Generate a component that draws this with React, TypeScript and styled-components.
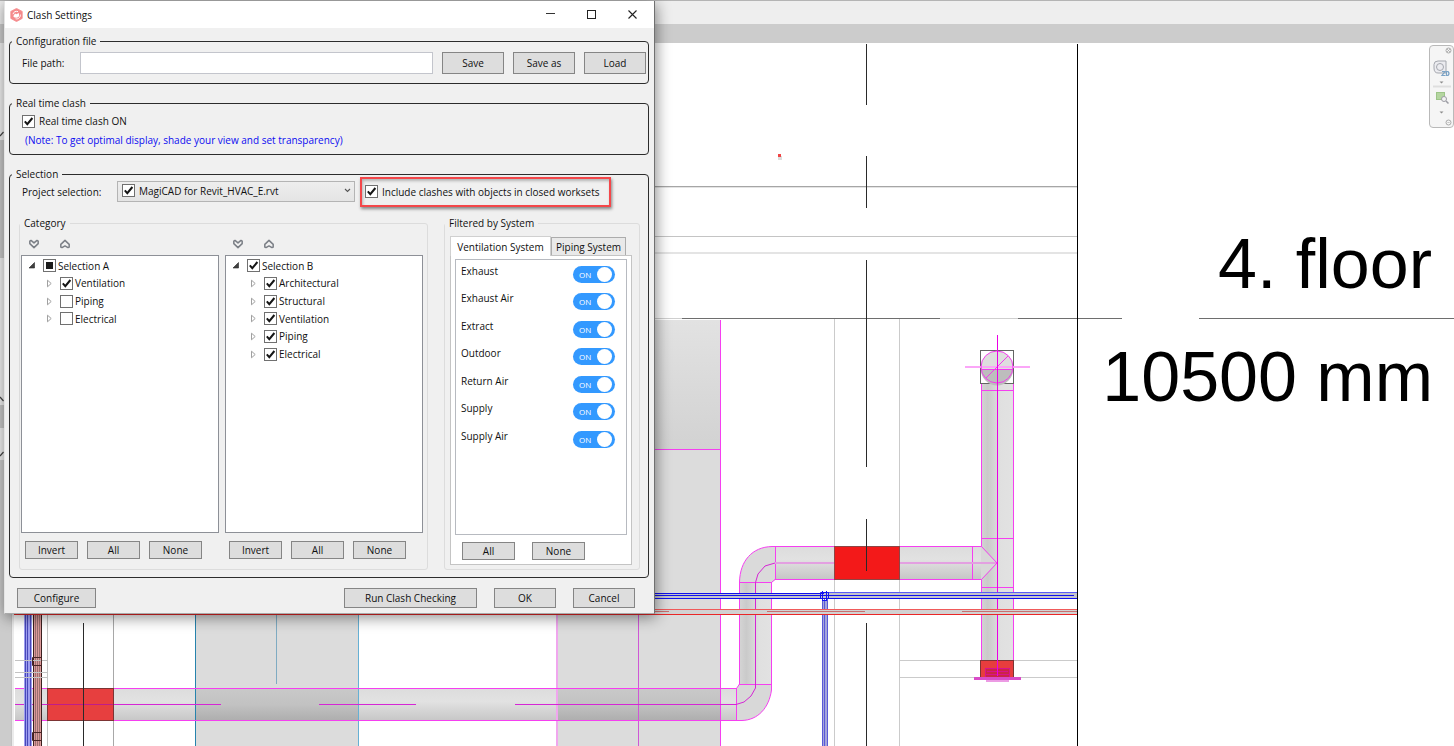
import React, { useEffect, useId, useRef, useState } from 'react';
import styled, { createGlobalStyle } from 'styled-components';

const GlobalStyle = createGlobalStyle`
  *, *::before, *::after { box-sizing: border-box; }
  body {
    margin: 0;
    background: #fff;
    color: #101010;
    font-family: 'Open Sans', 'Noto Sans', sans-serif;
    font-size: 10px;
    line-height: 14px;
  }
  button, input, select { font: inherit; color: inherit; margin: 0; }
`;

/* ---------- host application ---------- */

const Desktop = styled.div`
  position: relative;
  display: flex;
  flex-direction: column;
  min-height: 100vh;
  overflow: hidden;
`;

const Ribbon = styled.div`
  height: 24px;
  flex: none;
  background: #eee;
  border-top: 1px solid #b4b4b4;
`;

const TabStrip = styled.div`
  height: 19px;
  flex: none;
  background: #ccc;
`;

const Workspace = styled.div`
  display: flex;
  flex: 1;
`;

const Palette = styled.div`
  width: 14px;
  flex: none;
  display: flex;
  flex-direction: column;
  background: #ccc;
  border-right: 2px solid #ebebeb;
  box-shadow: inset -1px 0 #c4c4c4;
`;

const PaletteBlock = styled.div<{ $h: number; $light?: boolean }>`
  display: flex;
  flex-direction: column;
  justify-content: flex-end;
  height: ${(p) => p.$h}px;
  padding-bottom: 3px;
  background: ${(p) => (p.$light ? '#f0f0f0' : '#c8c8c8')};
`;

const Viewport = styled.main`
  position: relative;
  flex: 1;
  min-width: 0;
  overflow: hidden;
`;

const Sheet = styled.svg`
  display: block;
  width: 100%;
  height: auto;
`;

const NavBar = styled.nav`
  position: absolute;
  top: 2px;
  right: 0;
  width: 25px;
  height: 83px;
  border: 1px solid #b9b9b9;
  border-radius: 4px;
  background: #f5f5f5;
`;

/* ---------- dialog ---------- */

const Dialog = styled.section`
  position: absolute;
  top: 1px;
  left: 4px;
  width: 651px;
  background: #f0f0f0;
  border: solid #707070;
  border-width: 0 1px 1px;
  border-left-color: #e4e4e4;
  border-bottom-color: #aaa;
  box-shadow: 1px 3px 14px rgba(0, 0, 0, 0.48);
`;

const TitleBar = styled.header`
  display: flex;
  align-items: center;
  height: 27px;
  padding: 0 1px 0 5px;
  background: #fff;
`;

const Title = styled.h1`
  flex: 1;
  margin: 0 0 0 4px;
  font-size: 10px;
  font-weight: 400;
`;

const CaptionButton = styled.button`
  display: grid;
  place-items: center;
  width: 41px;
  height: 27px;
  padding: 0;
  border: 0;
  background: none;
`;

const Body = styled.form`
  padding: 6px 5px 5px 4px;
`;

const Section = styled.fieldset`
  min-width: 0;
  margin: 0 0 12px;
  padding: 0 2px;
  border: 1px solid #2c2c2c;
  border-radius: 4px;

  &:last-of-type { margin-bottom: 10px; }
`;

const Legend = styled.legend`
  padding: 0 4px;
  line-height: 14px;
`;

const FileRow = styled.div`
  display: flex;
  gap: 9px;
  padding: 4px 0 9px 10px;
`;

const FileLabel = styled.label`
  width: 49px;
  line-height: 22px;
`;

const PathInput = styled.input`
  flex: 1;
  min-width: 0;
  height: 22px;
  border: 1px solid #c3c5cc;
  background: #fff;
`;

const Button = styled.button<{ $w: number; $h: number }>`
  width: ${(p) => p.$w}px;
  height: ${(p) => p.$h}px;
  padding: 0;
  border: 1px solid #858585;
  background: #ddd;
  line-height: 14px;
  white-space: nowrap;
`;

const RealTimeBody = styled.div`
  display: grid;
  gap: 3px;
  padding: 3px 0 6px 10px;
  line-height: 16px;
`;

const Note = styled.p`
  margin: 0;
  padding-left: 3px;
  color: #0c0cf0;
`;

const CheckLabel = styled.label<{ $gap: number }>`
  display: flex;
  align-items: center;
  gap: ${(p) => p.$gap}px;
  white-space: nowrap;
`;

const CheckFrame = styled.span`
  display: inline-grid;
  flex: none;
  width: 13px;
  height: 13px;

  > * { grid-area: 1 / 1; }
  > svg { pointer-events: none; }
`;

const CheckInput = styled.input`
  appearance: none;
  width: 13px;
  height: 13px;
  border: 1px solid #707070;
  background: #fff;
`;

const ProjectRow = styled.div`
  display: flex;
  align-items: center;
  padding-left: 10px;
`;

const ProjectLabel = styled.label`
  width: 95px;
`;

const Combo = styled.div`
  display: flex;
  align-items: center;
  width: 238px;
  height: 21px;
  padding: 0 3px 2px 4px;
  border: 1px solid #b4b4b4;
  background: linear-gradient(#eee, #e4e4e4);
`;

const ComboSelect = styled.select`
  appearance: none;
  flex: 1;
  min-width: 0;
  height: 17px;
  padding: 0 0 0 4px;
  border: 0;
  background: none;
`;

const Highlight = styled.div`
  position: relative;
  margin-left: 10px;

  &::after {
    content: '';
    position: absolute;
    inset: -8px -11px -8px -5px;
    border: 2px solid #f4474a;
    box-shadow: 1px 2px 3px rgba(0, 0, 0, 0.45), inset 1px 2px 3px rgba(0, 0, 0, 0.25);
    pointer-events: none;
  }
`;

const Panels = styled.div`
  display: flex;
  justify-content: space-between;
  padding: 14px 6px 7px 7px;
`;

const Group = styled.fieldset<{ $w: number }>`
  width: ${(p) => p.$w}px;
  height: 354px;
  min-width: 0;
  margin: 0;
  padding: 0;
  border: 1px solid #dcdcdc;
  border-radius: 3px;
`;

const Trees = styled.div`
  display: flex;
  gap: 6px;
  padding-left: 1px;
`;

const TreeColumn = styled.div`
  width: 198px;
`;

const TreeTools = styled.div`
  display: flex;
  gap: 19px;
  padding: 8px 0 5px 7px;
`;

const IconButton = styled.button`
  display: block;
  width: 12px;
  height: 12px;
  padding: 0;
  border: 0;
  background: none;
`;

const Tree = styled.div`
  height: 278px;
  padding-top: 1px;
  border: 1px solid #8d9097;
  background: #fff;
`;

const TreeList = styled.ul`
  display: grid;
  grid-template-rows: repeat(6, 1fr);
  height: 106px;
  margin: 0;
  padding: 0;
  list-style: none;
`;

const TreeRow = styled.li<{ $child?: boolean }>`
  display: flex;
  align-items: center;
  gap: ${(p) => (p.$child ? 6 : 7)}px;
  padding-left: ${(p) => (p.$child ? 23 : 5)}px;
`;

const ButtonRow = styled.div<{ $gap: number; $top: number; $left: number }>`
  display: flex;
  gap: ${(p) => p.$gap}px;
  padding: ${(p) => p.$top}px 0 0 ${(p) => p.$left}px;
`;

const Tabs = styled.div`
  display: flex;
  align-items: flex-end;
  padding: 6px 0 0 5px;
`;

const Tab = styled.button<{ $active?: boolean }>`
  width: ${(p) => (p.$active ? 101 : 75)}px;
  height: ${(p) => (p.$active ? 20 : 18)}px;
  margin-bottom: ${(p) => (p.$active ? -1 : 0)}px;
  padding: 0;
  border: 1px solid ${(p) => (p.$active ? '#d0d0d0' : '#acacac')};
  border-bottom: 0;
  background: ${(p) => (p.$active ? '#fff' : '#e9e9e9')};
  white-space: nowrap;
  z-index: ${(p) => (p.$active ? 1 : 0)};
`;

const TabPanel = styled.div`
  width: 182px;
  height: 310px;
  margin-left: 5px;
  padding: 3px 4px 0;
  border: 1px solid #c4c4c4;
  background: #fff;
`;

const SystemBox = styled.div`
  height: 276px;
  border: 1px solid #b7bac0;
`;

const SystemList = styled.ul`
  display: grid;
  grid-template-rows: repeat(7, 1fr);
  height: 192px;
  margin: 0;
  padding: 0 11px 0 5px;
  list-style: none;
`;

const SystemRow = styled.li`
  label {
    display: flex;
    justify-content: space-between;
    padding-top: 4px;
  }
`;

const SwitchFrame = styled.span`
  display: grid;
  align-items: center;
  width: 42px;
  height: 17px;
  margin-top: 2px;

  > * { grid-area: 1 / 1; }
`;

const SwitchInput = styled.input`
  appearance: none;
  width: 42px;
  height: 17px;
  border-radius: 9px;
  background: #3399ff;

  &::after {
    content: '';
    display: block;
    width: 15px;
    height: 15px;
    margin: 1px 3px 1px 24px;
    border-radius: 50%;
    background: #fff;
  }
`;

const SwitchText = styled.span`
  padding-left: 6px;
  color: #fff;
  font-size: 8px;
  line-height: 17px;
  pointer-events: none;
`;

const Footer = styled.footer`
  display: flex;
  gap: 17px;
  padding: 0 14px 0 8px;
`;

const Spacer = styled.span`
  flex: 1;
`;

/* ---------- pieces ---------- */

type CheckState = 'on' | 'off' | 'mixed';

function Check({ state, id, label }: { state: CheckState; id?: string; label?: string }) {
  const [value, setValue] = useState<CheckState>(state);
  const ref = useRef<HTMLInputElement>(null);
  useEffect(() => {
    if (ref.current) ref.current.indeterminate = value === 'mixed';
  }, [value]);
  return (
    <CheckFrame>
      <CheckInput
        ref={ref}
        id={id}
        type="checkbox"
        aria-label={label}
        checked={value === 'on'}
        onChange={() => setValue(value === 'on' ? 'off' : 'on')}
      />
      <svg width="13" height="13" viewBox="0 0 13 13" aria-hidden="true">
        {value === 'on' && <path d="M2.8 6.4 5.3 9.2 10.4 3" fill="none" stroke="#151515" strokeWidth="2" />}
        {value === 'mixed' && <rect x="3" y="3" width="7" height="7" fill="#1c1c1c" />}
      </svg>
    </CheckFrame>
  );
}

function DownIcon() {
  return (
    <svg width="12" height="12" viewBox="0 0 12 12" fill="none" stroke="#7b7f86" strokeWidth="1.5" aria-hidden="true">
      <path d="M1.8 4.6V3.2L3 2.4 6 4.9 9 2.4 10.2 3.2V5.6L6 9.6 1.8 5.6Z" strokeLinejoin="round" />
    </svg>
  );
}

function UpIcon() {
  return (
    <svg width="12" height="12" viewBox="0 0 12 12" fill="none" stroke="#7b7f86" strokeWidth="1.5" aria-hidden="true">
      <path d="M1.8 7.4V9L3 9.6 6 7.9 9 9.6 10.2 9V6.4L6 2.4 1.8 6.4Z" strokeLinejoin="round" />
    </svg>
  );
}

function Expander({ open }: { open?: boolean }) {
  return (
    <svg width="9" height="9" viewBox="0 0 9 9" aria-hidden="true">
      {open ? (
        <path d="M7.5 1.5V7H2Z" fill="#404040" stroke="#262626" strokeWidth=".6" />
      ) : (
        <path d="M2.5 1.2V7.8L6.2 4.5Z" fill="#fff" stroke="#a0a0a0" />
      )}
    </svg>
  );
}

function PaletteArrow({ up }: { up?: boolean }) {
  return (
    <svg width="4" height="6" viewBox="0 0 4 6" aria-hidden="true">
      <path d={up ? 'M0 1 3.5 5' : 'M0 5 3.5 1'} fill="none" stroke="#444" strokeWidth="1.2" />
    </svg>
  );
}

type TreeItem = [string, CheckState];

function SelectionTree({ items }: { items: TreeItem[] }) {
  return (
    <TreeColumn>
      <TreeTools>
        <IconButton type="button" aria-label="Expand all"><DownIcon /></IconButton>
        <IconButton type="button" aria-label="Collapse all"><UpIcon /></IconButton>
      </TreeTools>
      <Tree>
        <TreeList>
          {items.map(([name, state], i) => (
            <TreeRow key={name} $child={i > 0}>
              <Expander open={i === 0} />
              <CheckLabel $gap={2}>
                <Check state={state} />
                {name}
              </CheckLabel>
            </TreeRow>
          ))}
        </TreeList>
      </Tree>
      <ButtonRow $gap={9} $top={8} $left={4}>
        <Button type="button" $w={53} $h={18}>Invert</Button>
        <Button type="button" $w={53} $h={18}>All</Button>
        <Button type="button" $w={53} $h={18}>None</Button>
      </ButtonRow>
    </TreeColumn>
  );
}

const selectionA: TreeItem[] = [
  ['Selection A', 'mixed'],
  ['Ventilation', 'on'],
  ['Piping', 'off'],
  ['Electrical', 'off'],
];

const selectionB: TreeItem[] = [
  ['Selection B', 'on'],
  ['Architectural', 'on'],
  ['Structural', 'on'],
  ['Ventilation', 'on'],
  ['Piping', 'on'],
  ['Electrical', 'on'],
];

const systems = ['Exhaust', 'Exhaust Air', 'Extract', 'Outdoor', 'Return Air', 'Supply', 'Supply Air'];

function ClashDialog() {
  const id = useId();
  return (
    <Dialog role="dialog" aria-label="Clash Settings">
      <TitleBar>
        <svg width="13" height="14" viewBox="0 0 13 14" aria-hidden="true">
          <path d="M6.5.4 12.2 3.4V10.4L6.5 13.6.8 10.4V3.4Z" fill="#f58a8c" stroke="#f58a8c" strokeWidth=".8" strokeLinejoin="round" />
          <path d="M3 6.2C3.4 3.8 6 2.8 8 3.6M10.4 6.6C10.6 9.4 8.2 11.4 5.6 10.8" fill="none" stroke="#fff" strokeWidth="1" />
          <path d="M3.2 8.2 5 5.4 6.4 6.2 8.8 5 9.2 8.2 7 9.8 4.6 9.6Z" fill="#fff" />
        </svg>
        <Title>Clash Settings</Title>
        <CaptionButton type="button" aria-label="Minimize">
          <svg width="9" height="9" aria-hidden="true"><path d="M0 3.5H9" stroke="#333" /></svg>
        </CaptionButton>
        <CaptionButton type="button" aria-label="Maximize">
          <svg width="9" height="9" aria-hidden="true"><rect x=".5" y=".5" width="8" height="8" fill="none" stroke="#222" /></svg>
        </CaptionButton>
        <CaptionButton type="button" aria-label="Close">
          <svg width="9" height="9" aria-hidden="true"><path d="M.5.5 8.5 8.5M8.5.5.5 8.5" stroke="#222" strokeWidth="1.1" /></svg>
        </CaptionButton>
      </TitleBar>

      <Body onSubmit={(e) => e.preventDefault()}>
        <Section>
          <Legend>Configuration file</Legend>
          <FileRow>
            <FileLabel htmlFor={`${id}path`}>File path:</FileLabel>
            <PathInput id={`${id}path`} type="text" />
            <Button type="button" $w={62} $h={22}>Save</Button>
            <Button type="button" $w={62} $h={22}>Save as</Button>
            <Button type="button" $w={62} $h={22}>Load</Button>
          </FileRow>
        </Section>

        <Section>
          <Legend>Real time clash</Legend>
          <RealTimeBody>
            <CheckLabel $gap={4}>
              <Check state="on" />
              Real time clash ON
            </CheckLabel>
            <Note>(Note: To get optimal display, shade your view and set transparency)</Note>
          </RealTimeBody>
        </Section>

        <Section>
          <Legend>Selection</Legend>
          <ProjectRow>
            <ProjectLabel htmlFor={`${id}project`}>Project selection:</ProjectLabel>
            <Combo>
              <Check state="on" label="Include project" />
              <ComboSelect id={`${id}project`}>
                <option>MagiCAD for Revit_HVAC_E.rvt</option>
              </ComboSelect>
              <svg width="7" height="5" viewBox="0 0 7 5" aria-hidden="true">
                <path d="M1 1 3.5 3.5 6 1" fill="none" stroke="#555" strokeWidth="1.1" />
              </svg>
            </Combo>
            <Highlight>
              <CheckLabel $gap={4}>
                <Check state="on" />
                Include clashes with objects in closed worksets
              </CheckLabel>
            </Highlight>
          </ProjectRow>

          <Panels>
            <Group $w={409}>
              <Legend>Category</Legend>
              <Trees>
                <SelectionTree items={selectionA} />
                <SelectionTree items={selectionB} />
              </Trees>
            </Group>

            <Group $w={196}>
              <Legend>Filtered by System</Legend>
              <Tabs role="tablist">
                <Tab type="button" role="tab" aria-selected="true" $active>Ventilation System</Tab>
                <Tab type="button" role="tab" aria-selected="false">Piping System</Tab>
              </Tabs>
              <TabPanel role="tabpanel">
                <SystemBox>
                  <SystemList>
                    {systems.map((name) => (
                      <SystemRow key={name}>
                        <label>
                          {name}
                          <SwitchFrame>
                            <SwitchInput type="checkbox" role="switch" defaultChecked />
                            <SwitchText aria-hidden="true">ON</SwitchText>
                          </SwitchFrame>
                        </label>
                      </SystemRow>
                    ))}
                  </SystemList>
                </SystemBox>
                <ButtonRow $gap={17} $top={7} $left={7}>
                  <Button type="button" $w={53} $h={18}>All</Button>
                  <Button type="button" $w={53} $h={18}>None</Button>
                </ButtonRow>
              </TabPanel>
            </Group>
          </Panels>
        </Section>

        <Footer>
          <Button type="button" $w={79} $h={20}>Configure</Button>
          <Spacer />
          <Button type="button" $w={133} $h={20}>Run Clash Checking</Button>
          <Button type="submit" $w={62} $h={20}>OK</Button>
          <Button type="button" $w={62} $h={20}>Cancel</Button>
        </Footer>
      </Body>
    </Dialog>
  );
}

function Drawing() {
  return (
    <Sheet viewBox="14 43 1440 703" role="img" aria-label="Section view, 4. floor">
      <defs>
        <linearGradient id="ductH" x1="0" y1="0" x2="0" y2="1">
          <stop offset="0" stopColor="#dcdcdc" />
          <stop offset=".4" stopColor="#e2e2e2" />
          <stop offset="1" stopColor="#c6c6c6" />
        </linearGradient>
        <linearGradient id="ductHDark" x1="0" y1="0" x2="0" y2="1">
          <stop offset="0" stopColor="#c9c9c9" />
          <stop offset=".5" stopColor="#c2c2c2" />
          <stop offset="1" stopColor="#adadad" />
        </linearGradient>
        <linearGradient id="ductV" x1="0" y1="0" x2="1" y2="0">
          <stop offset="0" stopColor="#d4d4d4" />
          <stop offset=".2" stopColor="#cacaca" />
          <stop offset=".6" stopColor="#e0e0e0" />
          <stop offset="1" stopColor="#e2e2e2" />
        </linearGradient>
        <linearGradient id="shaft" x1="0" y1="0" x2="0" y2="1">
          <stop offset="0" stopColor="#e2e2e2" />
          <stop offset="1" stopColor="#d2d2d2" />
        </linearGradient>
      </defs>

      {/* floor slab lines */}
      <g fill="none">
        <path d="M600 186.5H1077" stroke="#a6a6a6" />
        <path d="M600 187.5H1077" stroke="#e4e4e4" />
        <path d="M600 236.5H1077" stroke="#c4c4c4" />
        <path d="M600 253H1077" stroke="#e4e4e4" strokeWidth="2" />
        <path d="M600 318.5H1077" stroke="#cfcfcf" />
        <path d="M682 318.5H940M1018 318.5H1122M1199 318.5H1454" stroke="#6e6e6e" />
        <path d="M900 660.5H1077M900 677.5H1077M834.5 319V746M899.5 319V746" stroke="#cbcbcb" />
      </g>

      {/* shafts */}
      <rect x="557" y="320" width="163" height="426" fill="#dcdcdc" />
      <rect x="557" y="320" width="163" height="129" fill="url(#shaft)" />
      <rect x="195" y="600" width="163" height="146" fill="#dcdcdc" />

      {/* lower duct */}
      <rect x="15" y="688" width="722" height="33" fill="url(#ductH)" />
      <rect x="195" y="688" width="163" height="33" fill="url(#ductHDark)" />
      <rect x="557" y="688" width="163" height="33" fill="url(#ductHDark)" />
      <g fill="none">
        <path d="M195.5 600V746" stroke="#2683ad" />
        <path d="M358.5 600V746" stroke="#66b0d4" />
        <path d="M276.5 600V684" stroke="#7fabc2" />
        <path d="M557 600V746" stroke="#f0a6ee" strokeWidth="2" />
        <path d="M638.5 600V746" stroke="#cf57d6" />
        <path d="M720.5 320V746M600 449.5H720" stroke="#f53ff0" />
      </g>

      {/* upper duct with bends */}
      <path d="M739.5 582.5C740 561 752 547 772 546.5H776V579.5L771.5 582.5Z" fill="#dadada" />
      <path d="M736.5 688.5 739.5 684H771.5V690C769 708 758 720 742 720.5H736.5Z" fill="#d8d8d8" />
      <rect x="775" y="546" width="206" height="33" fill="url(#ductH)" />
      <rect x="740" y="582" width="32" height="102" fill="url(#ductV)" />
      <rect x="981" y="383" width="33" height="277" fill="url(#ductV)" />
      <path d="M981 546.5 997 563 981 579.5" fill="#d8d8d8" />
      <g fill="none" stroke="#f53ff0">
        <path d="M15 688.5H736.5L739.5 684V582C740 561 752 547 772 546.5H981.5" />
        <path d="M15 720.5H742C758 720 769 708 771.5 690V582.5L775 579.5H981.5" />
        <path d="M736.5 688V720M739 684.5H772M739 582.5H772M775.5 546V579M972.5 546V579" />
        <path d="M15 704.5H221M319 704.5H416M515 704.5H736L744 702 751 696 755.5 688V582.5L758 574 765 566 775 563" stroke="#d526d5" />
        <path d="M775 563H997" stroke="#e3a0e1" strokeWidth="2" />
        <path d="M981.5 383V546.5L997 563 981.5 579.5V660M1013.5 383V660M981 390.5H1014M981 538.5H1014M981 587.5H1014" />
      </g>
      <rect x="834.5" y="546.5" width="65" height="33" fill="#f31919" stroke="#8d4545" />

      {/* riser top */}
      <rect x="980.5" y="350.5" width="33" height="33" fill="#fff" stroke="#646464" />
      <circle cx="997" cy="367" r="16" fill="#dedede" />
      <path d="M981 369.5H1013A16 16 0 0 1 981 369.5Z" fill="#bdbdbd" />
      <path d="M965 367H1030" stroke="#fba6f8" strokeWidth="2" />
      <g fill="none" stroke="#f23cec">
        <circle cx="997" cy="367" r="16" />
        <path d="M986 378 1008 356M981 369.5H1013" />
      </g>

      {/* riser bottom */}
      <rect x="980.5" y="660.5" width="33" height="17" fill="#e73d3d" stroke="#7c3434" />
      <rect x="986" y="668" width="23" height="10" fill="#cc2448" />
      <path d="M985 668.5H1010M987 671.5H1008M985 674.5H1010M985.5 668V678M1009.5 668V678" stroke="#d8128c" fill="none" />
      <path d="M974 678.5H1021" stroke="#d94bc8" strokeWidth="3" />
      <path d="M986 681H1009" stroke="#ec9be4" strokeWidth="2" />
      <path d="M997.5 335V676" stroke="#ea00e4" />

      {/* pipes */}
      <rect x="600" y="593" width="477" height="6" fill="#c4c4cc" />
      <path d="M600 593.5H824M600 595.5H1074M600 598.5H1077" stroke="#1010ee" />
      <path d="M824 592.5H1077" stroke="#5c5cf6" />
      <rect x="822" y="600" width="6" height="146" fill="#a6a6da" />
      <path d="M822.5 598V746M824.5 598V746M827.5 598V746" stroke="#5a5ad8" />
      <path d="M820.5 592.5H828.5V598.5H820.5ZM822.5 591V600M826.5 591V600M822 600.5H827" stroke="#1414f0" fill="none" />
      <rect x="11" y="609" width="1066" height="6" fill="#d2d2d2" />
      <path d="M600 609.5H1077" stroke="#f05a5a" />
      <path d="M11 614.5H1077" stroke="#ea2626" />
      <path d="M600 611.5H669M767 611.5H865M962 611.5H1077" stroke="#c96f6f" />

      {/* left edge services */}
      <rect x="24" y="615" width="8" height="131" fill="#9d9df0" />
      <path d="M25.5 615V746M27.5 615V746M30.5 615V746" stroke="#4848b8" />
      <rect x="33" y="615" width="9" height="131" fill="#dc9a9a" />
      <path d="M35.5 615V746M37.5 615V746M39.5 615V746" stroke="#9a7070" />
      <path d="M33.5 615V746M41.5 615V746" stroke="#3b2020" />
      <path d="M15 660.5H47M15 672.5H47M15 677.5H47M47.5 615V746" stroke="#c3c3c3" />
      <path d="M113.5 615V746" stroke="#a8a8a8" />
      <path d="M32.5 657.5H41.5V665.5H32.5ZM32.5 732.5H41.5V740.5H32.5Z" fill="none" stroke="#4a2626" />
      <rect x="47.5" y="688.5" width="66" height="32" fill="#e73f3f" stroke="#7c3434" />
      <path d="M47 704.5H113" stroke="#c01c8a" />

      {/* grid axes */}
      <path d="M866.5 44V105M866.5 156V208M866.5 260V467M866.5 519V571M866.5 623V746M83.5 623V746" stroke="#2a2a2a" />
      <path d="M1077.5 44V746" stroke="#000" />

      <rect x="778" y="156" width="4" height="4" fill="#ddd" />
      <rect x="778" y="154" width="3" height="3" fill="#f04444" />

      <g fill="#000" fontFamily="'Liberation Sans', Arial, sans-serif" fontSize="70" textAnchor="end">
        <text x="1432" y="288">4. floor</text>
        <text x="1433" y="401">10500 mm</text>
      </g>
    </Sheet>
  );
}

export default function App() {
  return (
    <Desktop>
      <GlobalStyle />
      <Ribbon />
      <TabStrip />
      <Workspace>
        <Palette>
          <PaletteBlock $h={97} $light><PaletteArrow /></PaletteBlock>
          <PaletteBlock $h={118} />
          <PaletteBlock $h={147} $light><PaletteArrow up /></PaletteBlock>
          <PaletteBlock $h={23} />
          <PaletteBlock $h={32} $light><PaletteArrow /></PaletteBlock>
        </Palette>
        <Viewport>
          <Drawing />
          <NavBar aria-label="Navigation bar">
            <svg width="23" height="81" viewBox="0 0 23 81" fill="none" aria-hidden="true">
              <circle cx="18.5" cy="4.5" r="2.5" stroke="#aaa" />
              <path d="M17 3 20 6M20 3 17 6" stroke="#aaa" strokeWidth=".8" />
              <path d="M4 22V18.5Q4 15 8 15H16V27H8Q4 27 4 22Z" fill="#ececf0" stroke="#a4a7ae" />
              <circle cx="10" cy="21" r="3.5" stroke="#a4a7ae" />
              <path d="M12 25.5H15L12 29.5H15.5M16.5 25.5V29.5H18Q20 27.5 18 25.5Z" stroke="#7ba3c6" strokeWidth="1.2" />
              <path d="M9.5 35.5H13.5L11.5 37.5ZM9.5 65.5H13.5L11.5 67.5Z" fill="#8c8c8c" />
              <path d="M3 40.5H21" stroke="#dedede" strokeWidth="2" />
              <rect x="6.5" y="46.5" width="8" height="7" fill="#b4d5a0" stroke="#9cc487" />
              <circle cx="14" cy="53" r="2.5" fill="#f2f2f2" stroke="#9c9ca4" />
              <path d="M16 55 18.5 57.5" stroke="#9c9ca4" strokeWidth="1.5" />
              <circle cx="18.5" cy="76.5" r="2.5" stroke="#aaa" />
              <path d="M17.5 76 18.5 77 19.5 76" stroke="#aaa" strokeWidth=".8" />
            </svg>
          </NavBar>
        </Viewport>
      </Workspace>
      <ClashDialog />
    </Desktop>
  );
}
